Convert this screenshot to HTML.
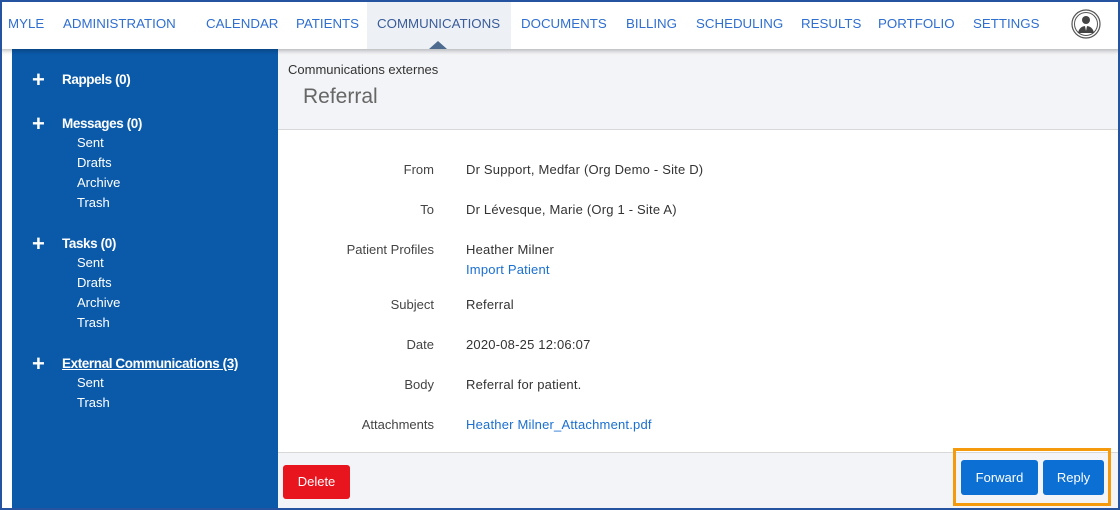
<!DOCTYPE html>
<html><head><style>
*{margin:0;padding:0;box-sizing:border-box}
body{width:1120px;height:510px;overflow:hidden;font-family:"Liberation Sans",sans-serif;background:#fff;position:relative}
.frame{position:absolute;inset:0;border:2px solid #2653a0;pointer-events:none;z-index:10}
.nav{position:absolute;left:0;top:0;width:1120px;height:49px;background:#fff;box-shadow:0 2px 4px rgba(0,0,0,.25);z-index:5}
.nav span{position:absolute;top:16px;font-size:13.3px;color:#2f6fd0}
.act{position:absolute;left:367px;top:0;width:144px;height:49px;background:#edf1f5}
.tri{position:absolute;left:429px;top:41px;width:0;height:0;border-left:9px solid transparent;border-right:9px solid transparent;border-bottom:8px solid #4d6b8f}
.side{position:absolute;left:12px;top:49px;width:266px;height:461px;background:#0b5aa9;color:#fff;font-size:13px}
.side .h{position:absolute;left:50px;font-weight:bold;font-size:13.5px;letter-spacing:-.4px}
.side .p{position:absolute;left:20px;font-size:22px;font-weight:bold;line-height:1}
.side .s{position:absolute;left:65px}
.main{position:absolute;left:278px;top:49px;width:840px;height:461px}
.hdr{position:absolute;left:0;top:0;width:840px;height:81px;background:#f3f4f7;border-bottom:1px solid #d8d8d8}
.lbl{position:absolute;right:684px;text-align:right;white-space:nowrap;font-size:13px;color:#444}
.val{position:absolute;left:188px;white-space:nowrap;font-size:13px;color:#333;letter-spacing:.2px}
.lnk{color:#1a6fd0}
.foot{position:absolute;left:0;top:403px;width:840px;height:58px;background:#f3f4f7;border-top:1px solid #d8d8d8}
.btn{position:absolute;color:#fff;font-size:13px;text-align:center;border-radius:3px}
</style></head><body>
<div class="nav">
<div class="act"></div><div class="tri"></div>
<span style="left:8px">MYLE</span>
<span style="left:63px">ADMINISTRATION</span>
<span style="left:206px">CALENDAR</span>
<span style="left:296px">PATIENTS</span>
<span style="left:377px;color:#3a5c9a">COMMUNICATIONS</span>
<span style="left:521px">DOCUMENTS</span>
<span style="left:626px">BILLING</span>
<span style="left:696px">SCHEDULING</span>
<span style="left:801px">RESULTS</span>
<span style="left:878px">PORTFOLIO</span>
<span style="left:973px">SETTINGS</span>
<svg style="position:absolute;left:1071px;top:9px" width="30" height="30" viewBox="0 0 30 30"><circle cx="15" cy="15" r="14" fill="#fff" stroke="#555" stroke-width="1.2"/><circle cx="15" cy="15" r="11.5" fill="none" stroke="#555" stroke-width="1"/><circle cx="15" cy="11" r="4" fill="#444"/><path d="M7 24c1-5 4-7 8-7s7 2 8 7z" fill="#444"/><path d="M14 17l1 5 1-5z" fill="#fff"/></svg>
</div>
<div class="side">
<div class="p" style="top:20px">+</div><div class="h" style="top:23px">Rappels (0)</div>
<div class="p" style="top:64px">+</div><div class="h" style="top:67px">Messages (0)</div>
<div class="s" style="top:86px">Sent</div><div class="s" style="top:106px">Drafts</div><div class="s" style="top:126px">Archive</div><div class="s" style="top:146px">Trash</div>
<div class="p" style="top:184px">+</div><div class="h" style="top:187px">Tasks (0)</div>
<div class="s" style="top:206px">Sent</div><div class="s" style="top:226px">Drafts</div><div class="s" style="top:246px">Archive</div><div class="s" style="top:266px">Trash</div>
<div class="p" style="top:304px">+</div><div class="h" style="top:307px;text-decoration:underline">External Communications (3)</div>
<div class="s" style="top:326px">Sent</div><div class="s" style="top:346px">Trash</div>
</div>
<div class="main">
<div class="hdr">
<div style="position:absolute;left:10px;top:13px;font-size:13px;color:#333">Communications externes</div>
<div style="position:absolute;left:25px;top:36px;font-size:21px;color:#666">Referral</div>
</div>
<div class="lbl" style="top:113px">From</div><div class="val" style="top:113px">Dr Support, Medfar (Org Demo - Site D)</div>
<div class="lbl" style="top:153px">To</div><div class="val" style="top:153px">Dr Lévesque, Marie (Org 1 - Site A)</div>
<div class="lbl" style="top:193px">Patient Profiles</div><div class="val" style="top:193px">Heather Milner</div>
<div class="val lnk" style="top:213px">Import Patient</div>
<div class="lbl" style="top:248px">Subject</div><div class="val" style="top:248px">Referral</div>
<div class="lbl" style="top:288px">Date</div><div class="val" style="top:288px">2020-08-25 12:06:07</div>
<div class="lbl" style="top:328px">Body</div><div class="val" style="top:328px">Referral for patient.</div>
<div class="lbl" style="top:368px">Attachments</div><div class="val lnk" style="top:368px">Heather Milner_Attachment.pdf</div>
<div class="foot">
<div class="btn" style="left:5px;top:12px;width:67px;height:34px;line-height:34px;background:#e8141e">Delete</div>
<div style="position:absolute;left:675px;top:-5px;width:158px;height:58px;border:3px solid #f59a0c"></div>
<div class="btn" style="left:683px;top:7px;width:77px;height:35px;line-height:35px;background:#0b6fd4">Forward</div>
<div class="btn" style="left:765px;top:7px;width:61px;height:35px;line-height:35px;background:#0b6fd4">Reply</div>
</div>
</div>
<div class="frame"></div>
</body></html>
